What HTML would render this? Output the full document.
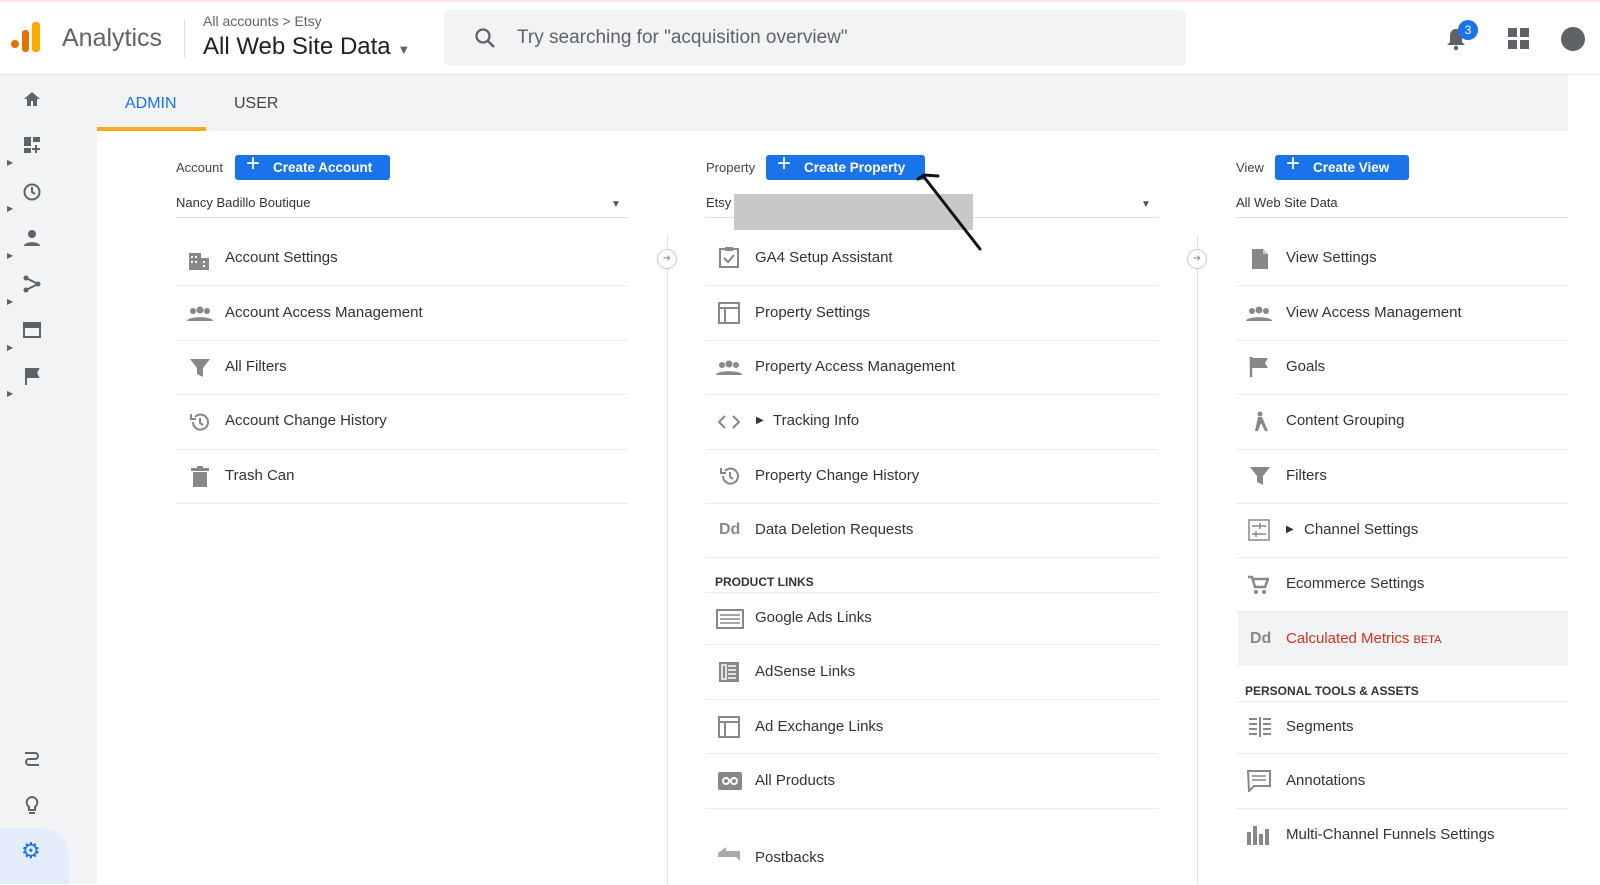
<!DOCTYPE html>
<html><head><meta charset="utf-8"><style>
*{margin:0;padding:0;box-sizing:border-box}
body{width:1600px;height:884px;overflow:hidden;background:#fff;font-family:"Liberation Sans",Arial,sans-serif;color:#333;position:relative}
.a{position:absolute}
.top{left:0;top:0;width:1600px;height:75px;background:#fff;border-top:2px solid #fde2e2;border-bottom:1px solid #e6e6e6}
.side{left:0;top:75px;width:97px;height:809px;background:#f1f3f4}
.tabs{left:97px;top:75px;width:1471px;height:56px;background:#f1f3f4}
.row{position:absolute;font-size:15px;color:#333;height:54px;line-height:54px}
.sep{position:absolute;height:1px;background:#ececec}
.ic{position:absolute;width:22px;height:22px}
.btn{position:absolute;top:155px;height:25px;background:#1a73e8;color:#fff;border-radius:3px;font-size:13.5px;font-weight:bold;line-height:25px;padding-left:38px}
.btn:before{content:"+";position:absolute;left:11px;top:-4px;font-size:24px;font-weight:normal}
.lbl{position:absolute;top:160px;font-size:13px;color:#444}
.dd{position:absolute;top:195px;font-size:13px;color:#333}
.hd{position:absolute;font-size:12px;font-weight:bold;color:#333}
.sic{position:absolute;left:22px;width:20px;height:20px}
</style></head><body>
<div class="a top"></div>
<div class="a" style="left:11px;top:40px;width:8px;height:8px;border-radius:50%;background:#e8710a"></div>
<div class="a" style="left:22px;top:30px;width:7px;height:22px;border-radius:3px;background:#e37400"></div>
<div class="a" style="left:32px;top:22px;width:8px;height:30px;border-radius:3px;background:#f9ab00"></div>
<div class="a" style="left:62px;top:24px;font-size:25px;color:#5f6368">Analytics</div>
<div class="a" style="left:184px;top:20px;width:1px;height:38px;background:#ddd"></div>
<div class="a" style="left:203px;top:13px;font-size:14px;color:#5f6368">All accounts &gt; Etsy</div>
<div class="a" style="left:203px;top:33px;font-size:24px;color:#202124">All Web Site Data <span style="font-size:13px;color:#5f6368">▼</span></div>
<div class="a" style="left:444px;top:10px;width:742px;height:56px;background:#f1f3f4;border-radius:6px"></div>
<svg class="a" style="left:473px;top:26px" width="24" height="24" viewBox="0 0 24 24"><circle cx="10" cy="10" r="6.5" fill="none" stroke="#5f6368" stroke-width="2.3"/><path d="M15 15l6 6" stroke="#5f6368" stroke-width="2.5"/></svg>
<div class="a" style="left:517px;top:27px;font-size:19px;color:#5f6368">Try searching for "acquisition overview"</div>
<svg class="a" style="left:1445px;top:26px" width="22" height="26" viewBox="0 0 22 26"><path d="M11 3c-4 0-6 3-6 7v6l-3 3h18l-3-3v-6c0-4-2-7-6-7z" fill="#5f6368"/><circle cx="11" cy="22" r="2.2" fill="#5f6368"/></svg>
<div class="a" style="left:1458px;top:20px;width:20px;height:20px;border-radius:50%;background:#1a73e8;color:#fff;font-size:12px;text-align:center;line-height:20px">3</div>
<svg class="a" style="left:1508px;top:28px" width="22" height="22"><g fill="#5f6368"><rect x="0" y="0" width="9" height="9"/><rect x="12" y="0" width="9" height="9"/><rect x="0" y="12" width="9" height="9"/><rect x="12" y="12" width="9" height="9"/></g></svg>
<div class="a" style="left:1561px;top:27px;width:24px;height:24px;border-radius:50%;background:#5f6368"></div>

<div class="a side"></div>
<div class="a tabs"></div>
<div class="a" style="left:125px;top:95px;font-size:16px;color:#1a73e8">ADMIN</div>
<div class="a" style="left:97px;top:127px;width:109px;height:4px;background:#f9a825"></div>
<div class="a" style="left:234px;top:95px;font-size:16px;color:#444">USER</div>

<svg class="sic" style="top:89px" viewBox="0 0 20 20"><path d="M2 10L10 3l8 7h-3v7h-4v-5H9v5H5v-7z" fill="#5f6368"/></svg>
<svg class="sic" style="top:135px" viewBox="0 0 20 20"><g fill="#5f6368"><rect x="2" y="2" width="7" height="9"/><rect x="11" y="2" width="7" height="5"/><rect x="2" y="13" width="7" height="5"/><path d="M13 10h2v3h3v2h-3v3h-2v-3h-3v-2h3z"/></g></svg>
<svg class="sic" style="top:182px" viewBox="0 0 20 20"><circle cx="10" cy="10" r="7.5" fill="none" stroke="#5f6368" stroke-width="2"/><path d="M10 5v5l3 2" fill="none" stroke="#5f6368" stroke-width="2"/></svg>
<svg class="sic" style="top:228px" viewBox="0 0 20 20"><circle cx="10" cy="6" r="4" fill="#5f6368"/><path d="M2 18c0-5 16-5 16 0z" fill="#5f6368"/></svg>
<svg class="sic" style="top:274px" viewBox="0 0 20 20"><g fill="#5f6368"><circle cx="4" cy="4" r="2.5"/><circle cx="4" cy="16" r="2.5"/><circle cx="16" cy="10" r="2.5"/></g><path d="M4 4l12 6L4 16" fill="none" stroke="#5f6368" stroke-width="2"/></svg>
<svg class="sic" style="top:320px" viewBox="0 0 20 20"><rect x="2" y="3" width="16" height="14" fill="none" stroke="#5f6368" stroke-width="2"/><rect x="2" y="3" width="16" height="5" fill="#5f6368"/></svg>
<svg class="sic" style="top:366px" viewBox="0 0 20 20"><path d="M4 2v17M4 3h12l-2 4 2 4H4" fill="#5f6368" stroke="#5f6368" stroke-width="2"/></svg>
<div class="a" style="left:7px;top:140px;font-size:8px;color:#5f6368;line-height:46.3px">▶<br>▶<br>▶<br>▶<br>▶<br>▶</div>
<svg class="sic" style="top:749px" viewBox="0 0 20 20"><path d="M3 4h10a3 3 0 010 6H7a3 3 0 000 6h10" fill="none" stroke="#5f6368" stroke-width="2"/></svg>
<svg class="sic" style="top:795px" viewBox="0 0 20 20"><path d="M10 2a5.5 5.5 0 00-3 10v3h6v-3a5.5 5.5 0 00-3-10z" fill="none" stroke="#5f6368" stroke-width="2"/><path d="M7 18h6" stroke="#5f6368" stroke-width="2"/></svg>
<div class="a" style="left:0;top:828px;width:69px;height:56px;background:#e2ecfb;border-radius:0 28px 0 0"></div>
<div class="a" style="left:21px;top:838px;font-size:22px;color:#1a73e8">⚙</div>

<div class="a" style="left:667px;top:235px;width:1px;height:649px;background:#e3e3e3"></div>
<div class="a" style="left:1197px;top:235px;width:1px;height:649px;background:#e3e3e3"></div>
<div class="a" style="left:657px;top:249px;width:20px;height:20px;border:1px solid #ccc;border-radius:50%;background:#fff;font-size:10px;color:#999;text-align:center;line-height:18px">➜</div>
<div class="a" style="left:1187px;top:249px;width:20px;height:20px;border:1px solid #ccc;border-radius:50%;background:#fff;font-size:10px;color:#999;text-align:center;line-height:18px">➜</div>

<div class="lbl" style="left:176px">Account</div>
<div class="btn" style="left:235px;width:155px">Create Account</div>
<div class="dd" style="left:176px">Nancy Badillo Boutique</div>
<div class="a" style="left:611px;top:199px;font-size:10px;color:#555">▼</div>
<div class="sep" style="left:176px;top:217px;width:452px;background:#ddd"></div>

<div class="lbl" style="left:706px">Property</div>
<div class="btn" style="left:766px;width:159px">Create Property</div>
<div class="dd" style="left:706px">Etsy (</div>
<div class="a" style="left:734px;top:194px;width:239px;height:36px;background:#c8c8c8"></div>
<div class="a" style="left:1141px;top:199px;font-size:10px;color:#555">▼</div>
<div class="sep" style="left:706px;top:217px;width:28px;background:#ddd"></div>
<div class="sep" style="left:973px;top:217px;width:185px;background:#ddd"></div>
<svg class="a" style="left:910px;top:165px" width="80" height="90"><path d="M70 84L14 12M8 14l6-4 14 1" fill="none" stroke="#111" stroke-width="3" stroke-linecap="round"/></svg>

<div class="lbl" style="left:1236px">View</div>
<div class="btn" style="left:1275px;width:134px">Create View</div>
<div class="dd" style="left:1236px">All Web Site Data</div>
<div class="sep" style="left:1236px;top:217px;width:332px;background:#ddd"></div>

<div class="a" style="left:1238px;top:612px;width:330px;height:54px;background:#f1f3f4"></div>

<div class="row" style="left:225px;top:231px">Account Settings</div>
<div class="row" style="left:225px;top:286px">Account Access Management</div>
<div class="row" style="left:225px;top:340px">All Filters</div>
<div class="row" style="left:225px;top:394px">Account Change History</div>
<div class="row" style="left:225px;top:449px">Trash Can</div>
<div class="sep" style="left:176px;top:285px;width:452px"></div>
<div class="sep" style="left:176px;top:340px;width:452px"></div>
<div class="sep" style="left:176px;top:394px;width:452px"></div>
<div class="sep" style="left:176px;top:449px;width:452px"></div>
<div class="sep" style="left:176px;top:503px;width:452px"></div>
<svg class="ic" style="left:188px;top:249px" viewBox="0 0 22 22"><g fill="#888"><rect x="1" y="4" width="12" height="17"/><rect x="13" y="9" width="8" height="12"/></g><g fill="#fff"><rect x="3" y="7" width="2" height="2"/><rect x="7" y="7" width="2" height="2"/><rect x="3" y="12" width="2" height="2"/><rect x="7" y="12" width="2" height="2"/><rect x="15" y="12" width="2" height="2"/><rect x="15" y="16" width="2" height="2"/></g></svg>
<svg class="ic" style="left:187px;top:303px;width:26px" viewBox="0 0 26 22"><g fill="#888"><circle cx="6" cy="8" r="3"/><circle cx="13" cy="7" r="3.5"/><circle cx="20" cy="8" r="3"/><path d="M0 18c0-5 26-5 26 0z"/></g></svg>
<svg class="ic" style="left:189px;top:357px" viewBox="0 0 22 22"><path d="M1 2h20l-7 9v9l-6-3v-6z" fill="#888"/></svg>
<svg class="ic" style="left:189px;top:411px" viewBox="0 0 22 22"><path d="M4 11a7.5 7.5 0 102-5" fill="none" stroke="#888" stroke-width="2"/><path d="M2 3v5h5" fill="none" stroke="#888" stroke-width="2"/><path d="M11 7v5l3 2" fill="none" stroke="#888" stroke-width="2"/></svg>
<svg class="ic" style="left:189px;top:465px" viewBox="0 0 22 22"><path d="M2 3h18v3H2zM8 1h6v2H8zM4 7h14v15H4z" fill="#888"/></svg>

<div class="row" style="left:755px;top:231px">GA4 Setup Assistant</div>
<div class="row" style="left:755px;top:286px">Property Settings</div>
<div class="row" style="left:755px;top:340px">Property Access Management</div>
<div class="row" style="left:773px;top:394px">Tracking Info</div>
<div class="a" style="left:756px;top:415px;font-size:10px;color:#333">▶</div>
<div class="row" style="left:755px;top:449px">Property Change History</div>
<div class="row" style="left:755px;top:503px">Data Deletion Requests</div>
<div class="hd" style="left:715px;top:575px">PRODUCT LINKS</div>
<div class="row" style="left:755px;top:591px">Google Ads Links</div>
<div class="row" style="left:755px;top:645px">AdSense Links</div>
<div class="row" style="left:755px;top:700px">Ad Exchange Links</div>
<div class="row" style="left:755px;top:754px">All Products</div>
<div class="row" style="left:755px;top:831px">Postbacks</div>
<div class="sep" style="left:706px;top:285px;width:452px"></div>
<div class="sep" style="left:706px;top:340px;width:452px"></div>
<div class="sep" style="left:706px;top:394px;width:452px"></div>
<div class="sep" style="left:706px;top:449px;width:452px"></div>
<div class="sep" style="left:706px;top:503px;width:452px"></div>
<div class="sep" style="left:706px;top:557px;width:452px"></div>
<div class="sep" style="left:706px;top:592px;width:452px"></div>
<div class="sep" style="left:706px;top:644px;width:452px"></div>
<div class="sep" style="left:706px;top:699px;width:452px"></div>
<div class="sep" style="left:706px;top:753px;width:452px"></div>
<div class="sep" style="left:706px;top:808px;width:452px"></div>
<svg class="ic" style="left:718px;top:246px" viewBox="0 0 22 22"><rect x="2" y="3" width="18" height="18" fill="none" stroke="#888" stroke-width="2"/><rect x="7" y="1" width="8" height="4" fill="#888"/><path d="M6 12l4 4 6-7" fill="none" stroke="#888" stroke-width="2"/></svg>
<svg class="ic" style="left:718px;top:302px" viewBox="0 0 22 22"><rect x="1" y="1" width="20" height="20" fill="none" stroke="#888" stroke-width="2"/><path d="M1 6h20M7 6v15" stroke="#888" stroke-width="2"/></svg>
<svg class="ic" style="left:716px;top:357px;width:26px" viewBox="0 0 26 22"><g fill="#888"><circle cx="6" cy="8" r="3"/><circle cx="13" cy="7" r="3.5"/><circle cx="20" cy="8" r="3"/><path d="M0 18c0-5 26-5 26 0z"/></g></svg>
<svg class="ic" style="left:716px;top:411px;width:26px" viewBox="0 0 26 22"><path d="M9 5l-6 6 6 6M17 5l6 6-6 6" fill="none" stroke="#888" stroke-width="2"/></svg>
<svg class="ic" style="left:719px;top:465px" viewBox="0 0 22 22"><path d="M4 11a7.5 7.5 0 102-5" fill="none" stroke="#888" stroke-width="2"/><path d="M2 3v5h5" fill="none" stroke="#888" stroke-width="2"/><path d="M11 7v5l3 2" fill="none" stroke="#888" stroke-width="2"/></svg>
<div class="a" style="left:719px;top:521px;font-size:16px;font-weight:bold;color:#888">Dd</div>
<svg class="ic" style="left:716px;top:608px;width:28px" viewBox="0 0 28 22"><rect x="1" y="2" width="26" height="18" fill="none" stroke="#888" stroke-width="2"/><path d="M4 7h20M4 11h20M4 15h20" stroke="#888" stroke-width="1.5"/></svg>
<svg class="ic" style="left:718px;top:661px" viewBox="0 0 22 22"><rect x="1" y="1" width="20" height="20" fill="#888"/><path d="M4 4h4v14H4zM10 5h8M10 9h8M10 13h8M10 17h8" stroke="#fff" stroke-width="1.5" fill="none"/></svg>
<svg class="ic" style="left:718px;top:716px" viewBox="0 0 22 22"><rect x="1" y="1" width="20" height="20" fill="none" stroke="#888" stroke-width="2"/><path d="M1 6h20M7 6v15" stroke="#888" stroke-width="2"/></svg>
<svg class="ic" style="left:717px;top:770px;width:26px" viewBox="0 0 26 22"><rect x="1" y="2" width="24" height="18" rx="2" fill="#888"/><circle cx="9" cy="11" r="3" fill="none" stroke="#fff" stroke-width="2"/><circle cx="17" cy="11" r="3" fill="none" stroke="#fff" stroke-width="2"/></svg>
<svg class="ic" style="left:716px;top:843px;width:28px" viewBox="0 0 28 22"><path d="M2 10l8-6v4h14v10l-4-4H2z" fill="#aaa"/></svg>

<div class="row" style="left:1286px;top:231px">View Settings</div>
<div class="row" style="left:1286px;top:286px">View Access Management</div>
<div class="row" style="left:1286px;top:340px">Goals</div>
<div class="row" style="left:1286px;top:394px">Content Grouping</div>
<div class="row" style="left:1286px;top:449px">Filters</div>
<div class="row" style="left:1304px;top:503px">Channel Settings</div>
<div class="a" style="left:1286px;top:524px;font-size:10px;color:#333">▶</div>
<div class="row" style="left:1286px;top:557px">Ecommerce Settings</div>
<div class="row" style="left:1286px;top:612px;color:#d93025">Calculated Metrics <span style="font-size:11px;color:#c5221f">BETA</span></div>
<div class="hd" style="left:1245px;top:684px">PERSONAL TOOLS &amp; ASSETS</div>
<div class="row" style="left:1286px;top:700px">Segments</div>
<div class="row" style="left:1286px;top:754px">Annotations</div>
<div class="row" style="left:1286px;top:808px">Multi-Channel Funnels Settings</div>
<div class="sep" style="left:1236px;top:285px;width:332px"></div>
<div class="sep" style="left:1236px;top:340px;width:332px"></div>
<div class="sep" style="left:1236px;top:394px;width:332px"></div>
<div class="sep" style="left:1236px;top:449px;width:332px"></div>
<div class="sep" style="left:1236px;top:503px;width:332px"></div>
<div class="sep" style="left:1236px;top:557px;width:332px"></div>
<div class="sep" style="left:1236px;top:611px;width:332px"></div>
<div class="sep" style="left:1236px;top:701px;width:332px"></div>
<div class="sep" style="left:1236px;top:753px;width:332px"></div>
<div class="sep" style="left:1236px;top:808px;width:332px"></div>
<svg class="ic" style="left:1249px;top:248px" viewBox="0 0 22 22"><path d="M3 1h11l5 5v15H3z" fill="#888"/><path d="M14 1v5h5" fill="#ccc"/></svg>
<svg class="ic" style="left:1246px;top:303px;width:26px" viewBox="0 0 26 22"><g fill="#888"><circle cx="6" cy="8" r="3"/><circle cx="13" cy="7" r="3.5"/><circle cx="20" cy="8" r="3"/><path d="M0 18c0-5 26-5 26 0z"/></g></svg>
<svg class="ic" style="left:1249px;top:356px" viewBox="0 0 22 22"><path d="M2 1v20" stroke="#888" stroke-width="2.5"/><path d="M3 2h16l-3 5 3 5H3z" fill="#888"/></svg>
<svg class="ic" style="left:1250px;top:411px" viewBox="0 0 22 22"><g fill="#888"><circle cx="10" cy="3" r="2.5"/><path d="M8 6h4l6 14h-3l-4-8-3 8H5z"/></g></svg>
<svg class="ic" style="left:1249px;top:465px" viewBox="0 0 22 22"><path d="M1 2h20l-7 9v9l-6-3v-6z" fill="#888"/></svg>
<svg class="ic" style="left:1248px;top:519px" viewBox="0 0 22 22"><rect x="1" y="1" width="20" height="20" fill="none" stroke="#888" stroke-width="1.5"/><path d="M4 7h14M4 15h14M12 4v6M8 12v6" stroke="#888" stroke-width="1.5"/></svg>
<svg class="ic" style="left:1247px;top:574px" viewBox="0 0 22 22"><path d="M1 3h4l3 10h10l3-8H6" fill="none" stroke="#888" stroke-width="2.5"/><circle cx="9" cy="18" r="2" fill="#888"/><circle cx="17" cy="18" r="2" fill="#888"/></svg>
<div class="a" style="left:1250px;top:630px;font-size:16px;font-weight:bold;color:#888">Dd</div>
<svg class="ic" style="left:1248px;top:716px;width:24px" viewBox="0 0 24 22"><path d="M1 3h8M1 8h8M1 13h8M1 18h8M12 1v20M15 3h8M15 8h8M15 13h8M15 18h8" stroke="#888" stroke-width="2"/></svg>
<svg class="ic" style="left:1247px;top:770px;width:24px" viewBox="0 0 24 22"><path d="M1 1h22v15H7l-5 5z" fill="none" stroke="#888" stroke-width="2"/><path d="M5 6h14M5 10h14" stroke="#888" stroke-width="1.5"/></svg>
<svg class="ic" style="left:1246px;top:824px;width:24px" viewBox="0 0 24 22"><g fill="#888"><rect x="1" y="8" width="4" height="13"/><rect x="7" y="2" width="4" height="19"/><rect x="13" y="10" width="4" height="11"/><rect x="19" y="5" width="4" height="16"/></g></svg>
</body></html>
